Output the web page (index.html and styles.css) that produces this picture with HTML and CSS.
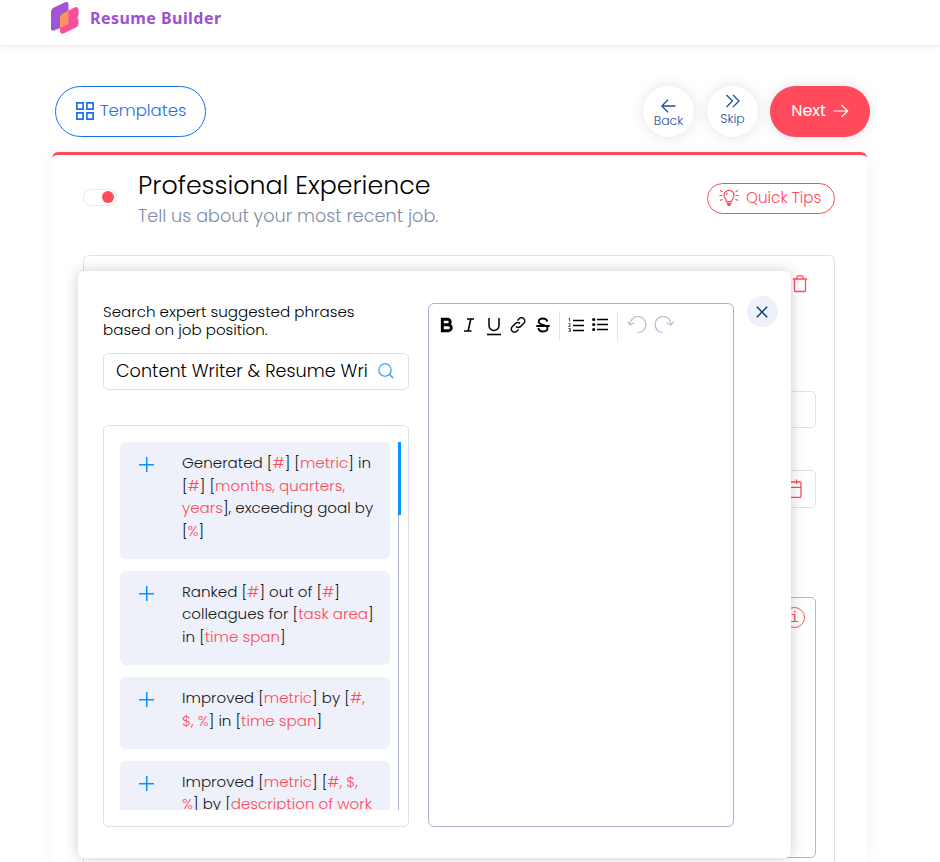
FILE: index.html
```html
<!DOCTYPE html>
<html lang="en">
  <head>
    <meta charset="UTF-8" />
    <title>Resume Builder</title>
    <link rel="stylesheet" href="styles.css">
  </head>
  <body>
    <header class="header">
      <svg class="logo" width="30" height="34" viewBox="0 0 30 34">
        <path d="M1 11q0-3 3-4.500L15 1.300q3.500-1.300 3.500 2V21q0 2.500-2.500 3.800L4 29.500q-3 1-3-2z" fill="#a155d3" />
        <path d="M10 17q0-3 3-4.500l11-5.800q4.500-2 4.500 2v5q0 2-1.500 3.300 1.500 0 1.500 2.500v3q0 2.500-2.500 4l-11.500 5.500q-4.500 2-4.500-2z" fill="#f94f9d" />
        <path d="M10 17q0-3 3-4.500l5.500-2.900V21q0 2.500-2.500 3.800l-6 2.300z" fill="#f8935c" />
        <g fill="#a957cf">
          <circle cx="22" cy="12" r=".6" /><circle cx="26" cy="14" r=".6" /><circle cx="23" cy="17" r=".6" />
          <circle cx="21" cy="21" r=".6" /><circle cx="26" cy="22" r=".6" /><circle cx="22" cy="25" r=".6" />
          <circle cx="17" cy="28" r=".6" /><circle cx="13" cy="30" r=".6" />
        </g>
      </svg>
      <span class="brand">Resume Builder</span>
    </header>

    <nav class="toolbar">
      <button class="btn-templates">
        <svg width="18" height="18" viewBox="0 0 18 18" fill="none" stroke="#1f6feb" stroke-width="1.700">
          <path d="M.9.900h6.200v6.200H.9zM10.900.900h6.200v6.200h-6.200zM.9 10.900h6.200v6.200H.9zM10.900 10.900h6.200v6.200h-6.200z" />
        </svg>
        <span>Templates</span>
      </button>
      <div class="nav-buttons">
        <button class="btn-round">
          <svg width="16" height="14" viewBox="0 0 16 14" fill="none" stroke="#1c5297" stroke-width="1.300">
            <path d="M14.500 7H1M7 .8L.8 7 7 13.200" />
          </svg>
          <span>Back</span>
        </button>
        <button class="btn-round btn-skip">
          <svg width="16" height="14" viewBox="0 0 16 14" fill="none" stroke="#1c5297" stroke-width="1.300">
            <path d="M1.500 1l6 6-6 6M8 1l6 6-6 6" />
          </svg>
          <span>Skip</span>
        </button>
        <button class="btn-next">
          <span>Next</span>
          <svg width="16" height="14" viewBox="0 0 16 14" fill="none" stroke="#fff" stroke-width="1.200">
            <path d="M.5 7h14M8.500.800L14.700 7l-6.200 6.200" />
          </svg>
        </button>
      </div>
    </nav>

    <main class="card">
      <div class="card-head">
        <span class="toggle"><span class="toggle-dot"></span></span>
        <div class="titles">
          <h1>Professional Experience</h1>
          <p>Tell us about your most recent job.</p>
        </div>
        <button class="btn-tips">
          <svg width="20" height="18" viewBox="0 0 20 18" fill="none" stroke="#ff4b5c" stroke-width="1.200">
            <path d="M7.500 12.500c0-2-2.500-3-2.500-6.200a5 5 0 0 1 10 0c0 3.200-2.500 4.200-2.500 6.200zM9 4q-1.500.500-1.800 2" />
            <path d="M7.500 14.500h5M8.500 16h3" stroke-width="1.800" />
            <path d="M.3 6.500h3M16.700 6.500h3M1 1.500l2.500 1.300M19 1.500l-2.500 1.300M1 11.500l2.500-1.300M19 11.500l-2.500-1.300" />
          </svg>
          <span>Quick Tips</span>
        </button>
      </div>

      <section class="job">
        <svg class="trash" width="16" height="18" viewBox="0 0 16 18" fill="none" stroke="#ff4b5c" stroke-width="1.300">
          <path d="M.8 4h14.400M2.500 4v11.300q0 1.200 1.200 1.200h8.600q1.200 0 1.200-1.200V4M5 4V2q0-1.200 1.200-1.200h3.600Q11 .8 11 2v2" />
        </svg>
        <div class="field"></div>
        <div class="field field-date">
          <svg width="20" height="20" viewBox="0 0 20 20" fill="none" stroke="#ff4b5c" stroke-width="1.300">
            <path d="M2 3h15q1 0 1 1v13.300q0 1-1 1H2q-1 0-1-1V4q0-1 1-1zM1 8.300h17M5.500.500v4.500M13.500.500v4.500" />
          </svg>
        </div>
        <div class="field field-text">
          <span class="info">i</span>
        </div>
      </section>

      <div class="modal">
        <div class="suggest">
          <label class="suggest-label">Search expert suggested phrases<br />based on job position.</label>
          <div class="search">
            <span class="search-text">Content Writer &amp; Resume Wri</span>
            <svg width="16" height="16" viewBox="0 0 16 16" fill="none" stroke="#1c96f3" stroke-width="1.100">
              <circle cx="7" cy="7" r="6.200" />
              <path d="M11.500 11.500l3.700 3.500" />
            </svg>
          </div>
          <div class="phrases">
            <div class="phrase-list">
              <div class="phrase">
                <span class="plus"></span>
                <p>Generated [<b>#</b>] [<b>metric</b>] in<br />[<b>#</b>] [<b>months, quarters,</b><br /><b>years</b>], exceeding goal by<br />[<b>%</b>]</p>
              </div>
              <div class="phrase">
                <span class="plus"></span>
                <p>Ranked [<b>#</b>] out of [<b>#</b>]<br />colleagues for [<b>task area</b>]<br />in [<b>time span</b>]</p>
              </div>
              <div class="phrase">
                <span class="plus"></span>
                <p>Improved [<b>metric</b>] by [<b>#,</b><br /><b>$, %</b>] in [<b>time span</b>]</p>
              </div>
              <div class="phrase">
                <span class="plus"></span>
                <p>Improved [<b>metric</b>] [<b>#, $,</b><br /><b>%</b>] by [<b>description of work</b></p>
              </div>
            </div>
            <div class="track"><div class="thumb"></div></div>
          </div>
        </div>

        <div class="editor">
          <div class="tools">
            <svg width="14" height="16" viewBox="0 0 14 16" fill="none" stroke="#000" stroke-width="2.900">
              <path d="M2.300 2.300h5.200a2.700 2.700 0 0 1 0 5.400H2.300zM2.300 7.700h6a3 3 0 0 1 0 6h-6z" />
            </svg>
            <svg width="12" height="16" viewBox="0 0 12 16" fill="none" stroke="#000" stroke-width="1.600">
              <path d="M4 2h7M1 14h7.500M7.800 2l-2.700 12" />
            </svg>
            <svg class="underline" width="16" height="20" viewBox="0 0 16 20" fill="none" stroke="#000" stroke-width="1.500">
              <path d="M3 2v7.500a5 5 0 0 0 10 0V2" />
              <path d="M1 18.500h14" stroke-width="1.600" />
            </svg>
            <svg width="18" height="16" viewBox="0 0 18 16" fill="none" stroke="#000" stroke-width="1.400">
              <path d="M7 9.500a3.200 3.200 0 0 0 4.600 0l3.200-3.200a3.200 3.200 0 0 0-4.600-4.600L8.500 3.400" />
              <path d="M11 6.500a3.200 3.200 0 0 0-4.600 0L3.200 9.700a3.200 3.200 0 0 0 4.600 4.600l1.700-1.700" />
            </svg>
            <svg width="14" height="16" viewBox="0 0 14 16" fill="none" stroke="#000" stroke-width="1.800">
              <path d="M11.300 4.500C10.800 2.500 9 1.500 7 1.500c-2.500 0-4.300 1.200-4.300 3.200C2.700 8.500 11.500 7 11.500 11c0 2.200-2 3.500-4.500 3.500S2.700 13.200 2.300 11M.3 9h13.400" />
            </svg>
            <i class="sep"></i>
            <svg width="17" height="16" viewBox="0 0 17 16" fill="none" stroke="#000" stroke-width="1.500">
              <path d="M5 3.500h11M5 8.500h11M5 13.500h11" />
              <path d="M.6 1.800l1-.600v3.200M.5 6.600h1.600v1.300l-1.500 1.500h2M.5 11.500h1.800v3H.5M.9 13h1.400" stroke-width=".7" />
            </svg>
            <svg class="bullets" width="16" height="16" viewBox="0 0 16 16" fill="none" stroke="#000" stroke-width="1.500">
              <path d="M5 2.500h11M5 7.500h11M5 12.500h11" />
              <path d="M1.700 2.500h.01M1.700 7.500h.01M1.700 12.500h.01" stroke-width="3.200" stroke-linecap="round" />
            </svg>
            <i class="sep"></i>
            <svg class="undo" width="20" height="18" viewBox="0 0 20 18" fill="none" stroke="#b0bbd0" stroke-width="1.200">
              <path d="M3 8.500a8 8 0 1 1 8 8M.5 5.500L3 9l4-2.200" />
            </svg>
            <svg class="redo" width="20" height="18" viewBox="0 0 20 18" fill="none" stroke="#b0bbd0" stroke-width="1.200">
              <path d="M17 8.500a8 8 0 1 0-8 8M19.500 5.500L17 9l-4-2.200" />
            </svg>
          </div>
        </div>

        <button class="close">
          <svg width="12" height="12" viewBox="0 0 12 12" stroke="#123d70" stroke-width="1.500">
            <path d="M.8.800l10.400 10.400M11.200.800L.8 11.200" />
          </svg>
        </button>
      </div>
    </main>
  </body>
</html>
```

FILE: styles.css
```css
* {
  box-sizing: border-box;
}
body {
  margin: 0;
  height: 862px;
  overflow: hidden;
  background-color: #fff;
  font-family: Poppins, Inter, sans-serif;
  font-weight: 300;
  color: #000;
}
button {
  font: inherit;
  border: none;
  padding: 0;
  background-color: #fff;
  display: flex;
  align-items: center;
}
svg {
  flex: none;
  display: block;
}
h1,
p {
  margin: 0;
  font-weight: 300;
}
.header {
  height: 45px;
  padding: 1px 0 0 50px;
  display: flex;
  align-items: flex-start;
  box-shadow: 0 2px 4px rgba(0, 0, 0, 0.08);
}
.brand {
  margin: 6px 0 0 10px;
  font-family: "Noto Sans", sans-serif;
  font-size: 16px;
  line-height: 22px;
  font-weight: 700;
  letter-spacing: 0.450px;
  color: #9b51d0;
}
.toolbar {
  display: flex;
  justify-content: space-between;
  padding: 41px 70px 15px 55px;
}
.btn-templates {
  width: 151px;
  height: 51px;
  border: 1px solid #1f6feb;
  border-radius: 26px;
  padding-left: 20px;
  padding-bottom: 2px;
  gap: 6px;
  font-size: 16.500px;
  color: #1f6feb;
}
.nav-buttons {
  display: flex;
}
.btn-round {
  width: 51px;
  height: 51px;
  margin-right: 13px;
  padding-top: 4px;
  flex-direction: column;
  justify-content: center;
  border-radius: 50%;
  box-shadow: 0 0 14px rgba(0, 0, 0, 0.12);
  font-size: 12.500px;
  line-height: 16px;
  color: #1c5297;
}
.btn-skip {
  padding-top: 0;
  padding-bottom: 3px;
  gap: 3px;
  margin-right: 12px;
}
.btn-next {
  width: 100px;
  height: 51px;
  padding-bottom: 2px;
  border-radius: 26px;
  justify-content: center;
  gap: 7px;
  background-color: #ff4b5c;
  box-shadow: 0 0 14px rgba(0, 0, 0, 0.12);
  font-size: 16px;
  font-weight: 400;
  color: #fff;
}
.card {
  position: relative;
  width: 815px;
  height: 710px;
  margin-left: 52px;
  padding: 0 32px 0 31px;
  border-top: 3px solid #ff4b5c;
  border-radius: 6px 6px 0 0;
  background-color: #fff;
  box-shadow: 0 0 14px rgba(0, 0, 0, 0.05);
}
.card-head {
  display: flex;
  height: 100px;
}
.toggle {
  width: 34px;
  height: 17px;
  margin-top: 34px;
  padding: 0 2px 1px;
  border: 1px solid #e9e9ec;
  border-radius: 9px;
  display: flex;
  justify-content: flex-end;
  align-items: center;
}
.toggle-dot {
  width: 12px;
  height: 12px;
  border-radius: 50%;
  background-color: #ff4b5c;
}
.titles {
  margin-left: 21px;
  flex: 1;
  white-space: nowrap;
}
h1 {
  margin-top: 13px;
  font-size: 25.300px;
  line-height: 34px;
}
.titles p {
  margin-top: 2px;
  font-size: 17.600px;
  line-height: 24px;
  letter-spacing: 0.030px;
  color: #7f8cab;
}
.btn-tips {
  width: 128px;
  height: 31px;
  margin-top: 28px;
  padding-left: 11px;
  padding-bottom: 2px;
  gap: 7px;
  border: 1px solid #ff4b5c;
  border-radius: 16px;
  font-size: 15.200px;
  color: #ff4b5c;
}
.job {
  height: 607px;
  border: 1px solid #dde2ee;
  border-bottom: none;
  border-radius: 6px 6px 0 0;
  padding: 19px 18px 0;
}
.trash {
  margin: 0 8px 98px auto;
}
.field {
  height: 37px;
  border: 1px solid #dde2ee;
  border-radius: 5px;
}
.field-date {
  height: 38px;
  margin-top: 42px;
  padding: 8px 12px;
  display: flex;
  justify-content: flex-end;
}
.field-text {
  height: 261px;
  margin-top: 89px;
  padding: 9px 10px;
  display: flex;
  justify-content: flex-end;
  border-color: #b0b9d0;
}
.info {
  width: 21px;
  height: 21px;
  border: 1px solid #ff4b5c;
  border-radius: 50%;
  text-align: center;
  font: 15px/21px "Liberation Mono", monospace;
  color: #ff4b5c;
}
.modal {
  position: absolute;
  left: 26px;
  top: 116px;
  width: 713px;
  height: 587px;
  padding: 25px 13px 31px 25px;
  display: flex;
  border-radius: 6px;
  background-color: #fff;
  box-shadow: 0 0 14px rgba(0, 0, 0, 0.2);
}
.suggest {
  width: 306px;
  padding-top: 7px;
}
.suggest-label {
  display: block;
  height: 50px;
  font-size: 15.100px;
  line-height: 18px;
  white-space: nowrap;
}
.search {
  height: 37px;
  padding: 0 14px 1px 12px;
  display: flex;
  align-items: center;
  justify-content: space-between;
  border: 1px solid #dedfec;
  border-radius: 5px;
}
.search-text {
  font-size: 17.600px;
  letter-spacing: 0.040px;
  white-space: nowrap;
}
.phrases {
  height: 402px;
  margin-top: 35px;
  padding: 16px 7px 16px 16px;
  display: flex;
  justify-content: space-between;
  border: 1px solid #dedfec;
  border-radius: 5px;
}
.phrase-list {
  width: 270px;
  overflow: hidden;
}
.phrase {
  margin-bottom: 12px;
  padding: 10px 0 16.800px 19px;
  display: flex;
  border-radius: 6px;
  background-color: #eef1f9;
}
.phrase p {
  margin-left: 28px;
  font-size: 15.100px;
  line-height: 22.500px;
  white-space: nowrap;
  color: #15171c;
}
.phrase b {
  font-weight: 300;
  color: #ff4b5c;
}
.plus {
  width: 15px;
  height: 15px;
  margin-top: 5px;
  background: linear-gradient(#0a91fb, #0a91fb) center / 15px 1.500px no-repeat,
    linear-gradient(#0a91fb, #0a91fb) center / 1.500px 15px no-repeat;
}
.track {
  width: 3px;
  background: linear-gradient(#a9b4cc, #a9b4cc) left / 1px 100% no-repeat;
}
.thumb {
  height: 73px;
  background-color: #0a91fb;
}
.editor {
  width: 306px;
  height: 524px;
  margin: 7px 0 0 19px;
  border: 1px solid #a9b4cc;
  border-radius: 6px;
}
.tools {
  display: flex;
  align-items: center;
  height: 30px;
  margin-top: 6px;
  padding-left: 11px;
  gap: 9px;
}
.tools .underline {
  margin: 1px -2px 0 2px;
}
.sep {
  width: 1px;
  height: 30px;
  margin: 2px -1px 0 0;
  background-color: #dde2ee;
}
.tools .bullets {
  margin-left: -2px;
}
.tools .undo {
  margin-left: 1px;
}
.tools .redo {
  margin-left: -2px;
}
.close {
  width: 31px;
  height: 31px;
  margin-left: 13px;
  padding-right: 1px;
  justify-content: center;
  border-radius: 50%;
  background-color: #eef1f9;
}
```
